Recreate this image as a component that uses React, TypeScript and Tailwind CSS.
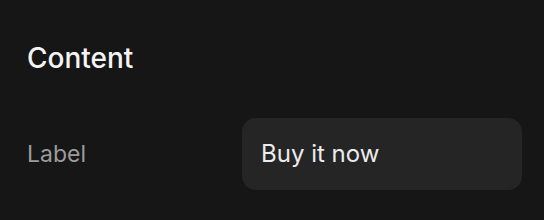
export default function App() {
  return (
    <div className="h-[220px] w-[544px] bg-[#161616] pl-[27px] pr-[22px] pt-[39px] font-['Inter',sans-serif]">
      <h2 className="text-[28px] font-medium leading-[38px] text-[#f4f4f4]">Content</h2>
      <div className="mt-[41px] flex items-center justify-between">
        <span className="text-[23px] text-[#9c9c9c]">Label</span>
        <div className="flex h-[72px] w-[280px] items-center rounded-[14px] bg-[#252525] px-[19px] text-[24px] text-[#ececec]">
          Buy it now
        </div>
      </div>
    </div>
  );
}
